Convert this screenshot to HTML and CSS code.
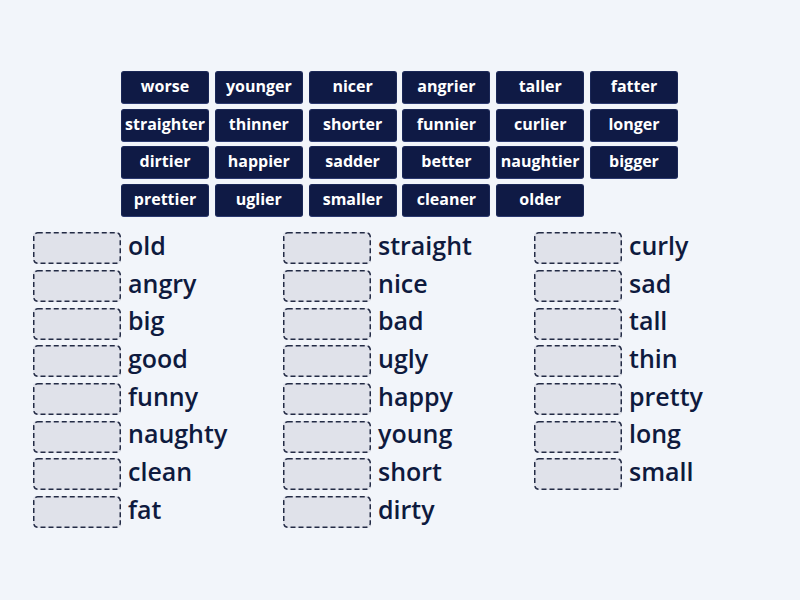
FILE: index.html
```html
<!DOCTYPE html>
<html>
<head>
<meta charset="utf-8">
<link rel="stylesheet" href="styles.css">
</head>
<body>
<div class="page">
  <div class="bank">
    <div class="tile">worse</div>
    <div class="tile">younger</div>
    <div class="tile">nicer</div>
    <div class="tile">angrier</div>
    <div class="tile">taller</div>
    <div class="tile">fatter</div>
    <div class="tile">straighter</div>
    <div class="tile">thinner</div>
    <div class="tile">shorter</div>
    <div class="tile">funnier</div>
    <div class="tile">curlier</div>
    <div class="tile">longer</div>
    <div class="tile">dirtier</div>
    <div class="tile">happier</div>
    <div class="tile">sadder</div>
    <div class="tile">better</div>
    <div class="tile">naughtier</div>
    <div class="tile">bigger</div>
    <div class="tile">prettier</div>
    <div class="tile">uglier</div>
    <div class="tile">smaller</div>
    <div class="tile">cleaner</div>
    <div class="tile">older</div>
  </div>
  <div class="targets">
    <div class="col">
      <div class="row"><span class="slot"></span><span class="word">old</span></div>
      <div class="row"><span class="slot"></span><span class="word">angry</span></div>
      <div class="row"><span class="slot"></span><span class="word">big</span></div>
      <div class="row"><span class="slot"></span><span class="word">good</span></div>
      <div class="row"><span class="slot"></span><span class="word">funny</span></div>
      <div class="row"><span class="slot"></span><span class="word">naughty</span></div>
      <div class="row"><span class="slot"></span><span class="word">clean</span></div>
      <div class="row"><span class="slot"></span><span class="word">fat</span></div>
    </div>
    <div class="col">
      <div class="row"><span class="slot"></span><span class="word">straight</span></div>
      <div class="row"><span class="slot"></span><span class="word">nice</span></div>
      <div class="row"><span class="slot"></span><span class="word">bad</span></div>
      <div class="row"><span class="slot"></span><span class="word">ugly</span></div>
      <div class="row"><span class="slot"></span><span class="word">happy</span></div>
      <div class="row"><span class="slot"></span><span class="word">young</span></div>
      <div class="row"><span class="slot"></span><span class="word">short</span></div>
      <div class="row"><span class="slot"></span><span class="word">dirty</span></div>
    </div>
    <div class="col">
      <div class="row"><span class="slot"></span><span class="word">curly</span></div>
      <div class="row"><span class="slot"></span><span class="word">sad</span></div>
      <div class="row"><span class="slot"></span><span class="word">tall</span></div>
      <div class="row"><span class="slot"></span><span class="word">thin</span></div>
      <div class="row"><span class="slot"></span><span class="word">pretty</span></div>
      <div class="row"><span class="slot"></span><span class="word">long</span></div>
      <div class="row"><span class="slot"></span><span class="word">small</span></div>
    </div>
  </div>
</div>
</body>
</html>
```
FILE: styles.css
```css
html, body {
  margin: 0;
  padding: 0;
  background: #f2f5fa;
}
.page {
  width: 800px;
  height: 600px;
  box-sizing: border-box;
  padding-top: 71px;
  font-family: "Open Sans", "Liberation Sans", sans-serif;
  color: #0e1a3e;
}
.bank {
  margin-left: 121px;
  display: grid;
  grid-template-columns: repeat(6, 88px);
  grid-auto-rows: 33px;
  column-gap: 5.8px;
  row-gap: 4.5px;
}
.tile {
  background: #0f1a45;
  border: 1px solid #1a2756;
  border-bottom-color: #2c3a70;
  border-radius: 3px;
  box-sizing: border-box;
  color: #ffffff;
  font-weight: 700;
  font-size: 16px;
  padding-bottom: 3px;
  display: flex;
  align-items: center;
  justify-content: center;
  white-space: nowrap;
}
.targets {
  margin-top: 16px;
  margin-left: 33px;
  display: grid;
  grid-template-columns: 250px 251px 200px;
}
.col {
  display: flex;
  flex-direction: column;
  gap: 6px;
}
.row {
  display: flex;
  align-items: center;
  height: 31.7px;
}
.slot {
  width: 88px;
  height: 32px;
  box-sizing: border-box;
  background-color: #e0e2ea;
  background-image: url("data:image/svg+xml;utf8,<svg xmlns='http://www.w3.org/2000/svg' width='88' height='32'><rect x='0.75' y='0.75' width='86.5' height='30.5' rx='4' ry='4' fill='none' stroke='%23232b45' stroke-width='1.5' stroke-dasharray='5 3'/></svg>");
  border-radius: 4px;
  flex: none;
}
.word {
  margin-left: 7px;
  font-size: 25px;
  font-weight: 600;
  line-height: 1;
  position: relative;
  top: -3px;
}
```
